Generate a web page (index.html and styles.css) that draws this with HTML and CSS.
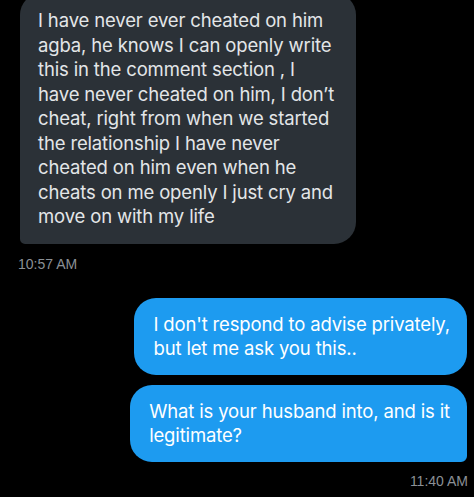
FILE: index.html
```html
<html>
	<head>
		<title>Messages</title>
		<link rel="stylesheet" href="styles.css">
	</head>
	<body>
		<div class="chat">
			<div class="group in">
				<div class="bubble gray">
					I have never ever cheated on him<br>
					agba, he knows I can openly write<br>
					this in the comment section , I<br>
					have never cheated on him, I don’t<br>
					cheat, right from when we started<br>
					the relationship I have never<br>
					cheated on him even when he<br>
					cheats on me openly I just cry and<br>
					move on with my life
				</div>
				<div class="time">10:57 AM</div>
			</div>
			<div class="group out">
				<div class="bubble blue">
					I don't respond to advise privately,<br>
					but let me ask you this..
				</div>
				<div class="bubble blue last">
					What is your husband into, and is it<br>
					legitimate?
				</div>
				<div class="time">11:40 AM</div>
			</div>
		</div>
	</body>
</html>
```

FILE: styles.css
```css
body {
	margin: 0;
	background: #000;
	overflow: hidden;
}
.chat {
	display: flex;
	flex-direction: column;
	padding: 0 6px 0 18px;
	margin-top: -7px;
}
.group {
	display: flex;
	flex-direction: column;
	gap: 10px;
}
.group.in {
	align-items: flex-start;
}
.group.out {
	align-items: flex-end;
	margin-top: 25px;
}
.bubble {
	font-family: Inter, sans-serif;
	font-size: 18.5px;
	letter-spacing: -0.15px;
	line-height: 24.5px;
	padding: 15px 18px;
	border-radius: 22px;
	white-space: nowrap;
}
.gray {
	margin-left: 2px;
	background: #2b3137;
	color: #e3e6e8;
	border-bottom-left-radius: 5px;
	padding-right: 22px;
}
.blue {
	background: #1d9bf0;
	color: #fff;
	margin-right: 1px;
	padding: 14px 17px 14px 19px;
}
.blue.last {
	border-bottom-right-radius: 6px;
}
.time {
	font-family: "Liberation Sans", Arial, sans-serif;
	font-size: 14px;
	line-height: 18px;
	color: #8b9096;
	margin-top: 1px;
}
.out .time {
	margin-top: 0;
}
```
